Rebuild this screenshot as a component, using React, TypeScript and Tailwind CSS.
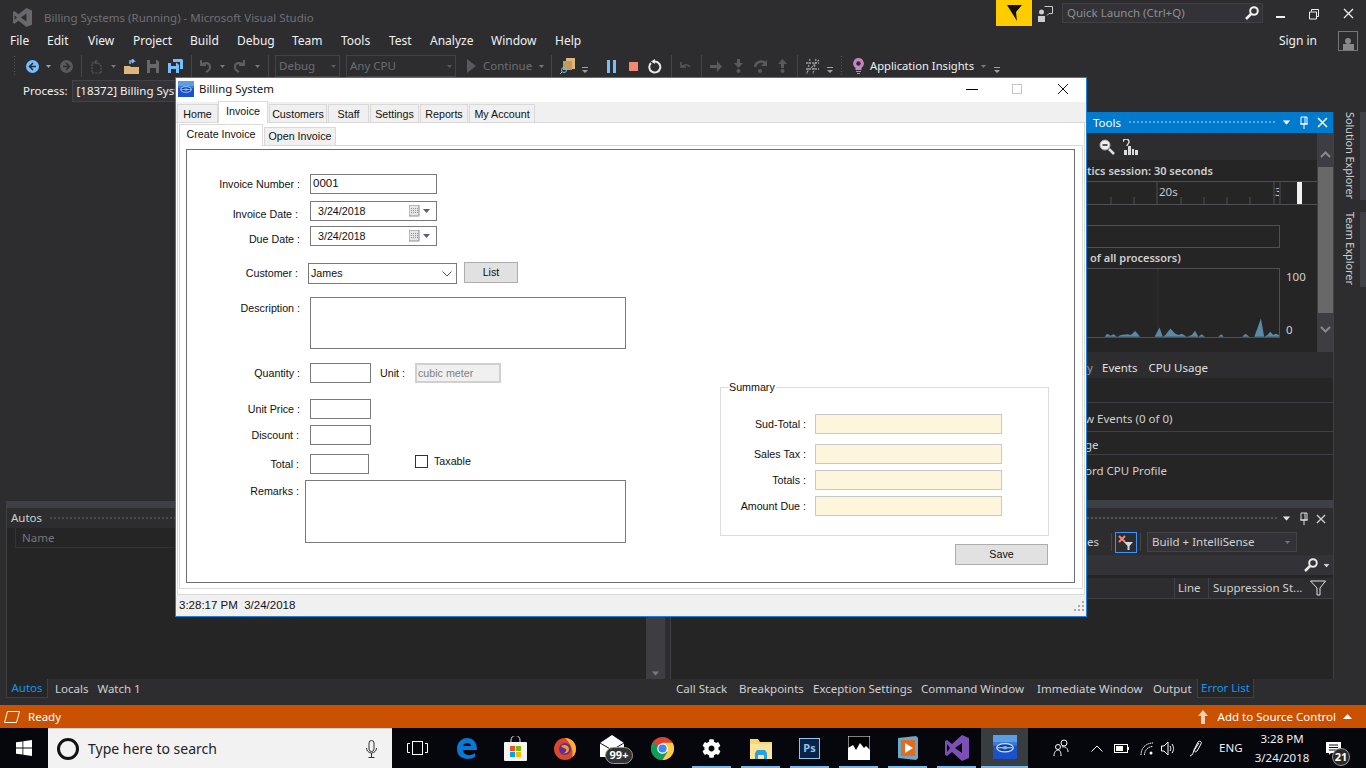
import React from "react";
import { FaCog } from "react-icons/fa";

const menus = [
    ["File", "w-[37px]"], ["Edit", "w-[41px]"], ["View", "w-[45px]"], ["Project", "w-[57px]"],
    ["Build", "w-[47px]"], ["Debug", "w-[55px]"], ["Team", "w-[49px]"], ["Tools", "w-[48px]"],
    ["Test", "w-[41px]"], ["Analyze", "w-[61px]"], ["Window", "w-[64px]"], ["Help", "w-[40px]"],
];

const mainTabs = [
    ["Home", "w-[41px]"], ["Customers", "w-[58px] ml-[1px]"], ["Staff", "w-[41px] ml-[1px]"],
    ["Settings", "w-[49px] ml-[1px]"], ["Reports", "w-[48px] ml-[1px]"], ["My Account", "w-[66px] ml-[1px]"],
];

const chartPath = "M20 695L70 695 78 686 88 692 97 688 108 695 120 690 140 688 150 690 163 678 178 695 222 695 237 667 247 695 255 690 270 670 285 686 295 690 305 686 320 695 335 690 345 677 355 695 365 688 375 695 415 695 425 688 432 695 488 695 498 686 510 695 525 695 545 640 555 695 565 690 573 680 583 690 590 686 600 690 600 695Z";

function Sep({ className }: { className: string }) {
    return <div className={`h-[22px] w-px bg-[#46464a] ${className}`} />;
}

function Caret({ className, color = "#77777b" }: { className: string; color?: string }) {
    return (
        <svg className={className} width="5" height="3" viewBox="0 0 5 3"><path d="M0 0h5L2.5 3z" fill={color} /></svg>
    );
}

function Overflow({ className }: { className: string }) {
    return (
        <svg className={className} width="6" height="6" viewBox="0 0 6 6"><path d="M0 0h6v1H0zM0 3h6L3 6z" fill="#a0a0a0" /></svg>
    );
}

function Grip({ className }: { className: string }) {
    return <div className={`h-[22px] w-[3px] bg-[radial-gradient(#55555a_0.7px,transparent_0.8px)] bg-[length:3px_3px] ${className}`} />;
}

function Dots({ className }: { className: string }) {
    return <div className={`h-[5px] bg-[length:4px_4px] ${className}`} />;
}

function Toolbar() {
    return (
        <div className="flex h-[24px] items-center pl-[13px] text-[11.5px] text-[#6d6d70]">
            <Grip className="" />
            <svg className="ml-[10px]" width="13" height="13" viewBox="0 0 13 13"><circle cx="6.5" cy="6.5" r="6.5" fill="#75beff" /><path d="M7 3L3.5 6.5 7 10M4 6.5h6" stroke="#2d2d30" strokeWidth="1.6" fill="none" /></svg>
            <Caret className="ml-[7px]" color="#a0a0a0" />
            <svg className="ml-[9px]" width="13" height="13" viewBox="0 0 13 13"><circle cx="6.5" cy="6.5" r="6.5" fill="#5a5a5e" /><path d="M6 3l3.5 3.5L6 10M9 6.5H3" stroke="#2d2d30" strokeWidth="1.6" fill="none" /></svg>
            <Sep className="ml-[8px]" />
            <svg className="ml-[8px]" width="13" height="15" viewBox="0 0 13 15"><path d="M2 4h6l3 3v7H2zM6 1v4M4 3h4" stroke="#59595d" strokeWidth="1.2" strokeDasharray="2 1" fill="none" /></svg>
            <Caret className="ml-[8px]" />
            <svg className="ml-[8px]" width="15" height="15" viewBox="0 0 15 15"><path d="M0 7h6l1 1h8v7H0z" fill="#dcb67a" /><path d="M6 5V2h4L8 0M10 2l-2 2" stroke="#75beff" strokeWidth="1.5" fill="none" /></svg>
            <svg className="ml-[8px]" width="12" height="13" viewBox="0 0 12 13"><path d="M0 0h10l2 2v11H0zM3 0v4h6V0zM3 8v5h6V8z" fill="#68686c" fillRule="evenodd" /></svg>
            <svg className="ml-[9px]" width="15" height="14" viewBox="0 0 15 14"><path d="M0 4h9l2 2v8H0zM3 4v3h5V4zM3 10v4h5v-4z" fill="#75beff" fillRule="evenodd" /><path d="M5 0h9l1 1v9h-3V3H5z" fill="#75beff" /></svg>
            <Sep className="ml-[8px]" />
            <svg className="ml-[7px]" width="13" height="14" viewBox="0 0 13 14"><path d="M2 1v5h5M2.5 6C5 3 11 3 11 8c0 2-1.500 4-4 5" stroke="#5f5f63" strokeWidth="2" fill="none" /></svg>
            <Caret className="ml-[8px]" />
            <svg className="ml-[8px]" width="13" height="14" viewBox="0 0 13 14"><path d="M11 1v5H6M10.500 6C8 3 2 3 2 8c0 2 1.500 4 4 5" stroke="#5f5f63" strokeWidth="2" fill="none" /></svg>
            <Caret className="ml-[9px]" />
            <Sep className="ml-[8px]" />
            <div className="ml-[6px] flex h-[22px] w-[65px] items-center justify-between border border-[#434346] px-[3px]"><span>Debug</span><Caret className="" color="#5a5a5e" /></div>
            <div className="ml-[6px] flex h-[22px] w-[110px] items-center justify-between border border-[#434346] px-[3px]"><span>Any CPU</span><Caret className="" color="#5a5a5e" /></div>
            <svg className="ml-[11px]" width="9" height="14" viewBox="0 0 9 14"><path d="M0 0l9 7-9 7z" fill="#5a5a5e" /></svg>
            <span className="ml-[7px] w-[50px]">Continue</span>
            <Caret className="ml-[6px]" />
            <Sep className="ml-[7px]" />
            <svg className="ml-[8px]" width="16" height="16" viewBox="0 0 16 16"><path d="M6 0h9v11H6z" fill="#dcb67a" /><path d="M3 3h9v9H3z" fill="#c29a5f" /><circle cx="4" cy="12" r="2.500" fill="none" stroke="#75beff" /><path d="M2 14l-2 2" stroke="#75beff" /></svg>
            <Overflow className="ml-[6px] mt-[8px]" />
            <div className="ml-[19px] flex h-[13px] w-[9px] justify-between"><div className="w-[3px] bg-[#75beff]" /><div className="w-[3px] bg-[#75beff]" /></div>
            <div className="ml-[13px] size-[9px] bg-[#f48771]" />
            <svg className="ml-[10px]" width="14" height="15" viewBox="0 0 14 15"><path d="M3 4a5.500 5.500 0 1 0 4-1.500" stroke="#e8e8e8" strokeWidth="2" fill="none" /><path d="M7 0v5L3 2.500z" fill="#e8e8e8" /></svg>
            <Sep className="ml-[9px]" />
            <svg className="ml-[7px]" width="13" height="13" viewBox="0 0 13 13"><path d="M2 2v5h5M2.500 7C5 4 9 4 11 7" stroke="#55555a" strokeWidth="1.600" fill="none" /></svg>
            <Sep className="ml-[9px]" />
            <svg className="ml-[8px]" width="12" height="11" viewBox="0 0 12 11"><path d="M0 4h7V0l5 5.500L7 11V7H0z" fill="#5a5a5e" /></svg>
            <svg className="ml-[12px]" width="9" height="14" viewBox="0 0 9 14"><path d="M3 0h3v4h3L4.500 9 0 4h3z" fill="#5a5a5e" /><circle cx="4.500" cy="12" r="2" fill="#5a5a5e" /></svg>
            <svg className="ml-[11px]" width="13" height="14" viewBox="0 0 13 14"><path d="M1 8C2 2 9 1 12 5" stroke="#5a5a5e" strokeWidth="2.500" fill="none" /><path d="M13 1v6H7z" fill="#5a5a5e" /><circle cx="6" cy="12" r="2" fill="#5a5a5e" /></svg>
            <svg className="ml-[11px]" width="9" height="14" viewBox="0 0 9 14"><path d="M3 9h3V5h3L4.500 0 0 5h3z" fill="#5a5a5e" /><circle cx="4.500" cy="12" r="2" fill="#5a5a5e" /></svg>
            <Sep className="ml-[10px]" />
            <svg className="ml-[7px]" width="15" height="17" viewBox="0 0 15 17"><path d="M5 1L2 16M11 1L8 16M1 5h13M1 11h13M14 2L1 15" stroke="#9a9a9a" strokeWidth="1.300" strokeDasharray="2 1" fill="none" /></svg>
            <Overflow className="ml-[7px] mt-[8px]" />
            <Grip className="ml-[7px]" />
            <svg className="ml-[10px]" width="11" height="16" viewBox="0 0 11 16"><path d="M5.500 0a5.500 5.500 0 0 1 3 10v2h-6v-2a5.500 5.500 0 0 1 3-10z" fill="#c586c0" /><circle cx="5.500" cy="5.500" r="2.200" fill="#2d2d30" /><path d="M3 13.500h5M4 15.500h3" stroke="#c586c0" /></svg>
            <span className="ml-[6px] w-[105px] whitespace-nowrap text-[11.2px] text-[#f1f1f1]">Application Insights</span>
            <Caret className="ml-[6px]" />
            <Overflow className="ml-[8px] mt-[8px]" />
        </div>
    );
}

function Field({ className = "" }: { className?: string }) {
    return <div className={`h-[20px] border border-[#7a7a7a] bg-white ${className}`} />;
}

function Label({ text, className = "" }: { text: string; className?: string }) {
    return <div className={`mr-[1px] w-[113px] shrink-0 whitespace-nowrap text-right ${className}`}>{text}</div>;
}

function DateField() {
    return (
        <div className="ml-[9px] flex h-[20px] w-[127px] items-center border border-[#7a7a7a] pl-[7px] pr-[6px]">
            <span className="flex-1">3/24/2018</span>
            <svg width="11" height="12" viewBox="0 0 11 12"><path d="M0 0h10v11H0z" fill="#e4e6ea" stroke="#8a8f98" /><path d="M2 3h1v1H2zM4 3h1v1H4zM6 3h1v1H6zM8 3h1v1H8zM2 5h1v1H2zM4 5h1v1H4zM6 5h1v1H6zM8 5h1v1H8zM2 7h1v1H2zM4 7h1v1H4zM6 7h1v1H6zM8 7h1v1H8z" fill="#8a8f98" /></svg>
            <svg className="ml-[3px]" width="7" height="4" viewBox="0 0 7 4"><path d="M0 0h7L3.500 4z" fill="#566074" /></svg>
        </div>
    );
}

function SummaryRow({ text, className }: { text: string; className: string }) {
    return (
        <div className={`flex items-center ${className}`}>
            <div className="w-[85px] whitespace-nowrap text-right">{text}</div>
            <div className="ml-[9px] h-[20px] w-[187px] border border-[#c8c8c8] bg-[#fdf6dd]" />
        </div>
    );
}

function InvoiceForm() {
    return (
        <div className="flex h-[434px] w-[889px] border border-[#6e6e6e] font-['Liberation_Sans',sans-serif] text-[10.7px] text-[#101010]">
            <div className="w-[533px] shrink-0 pt-[24px]">
                <div className="flex items-center">
                    <Label text="Invoice Number :" />
                    <div className="ml-[9px] flex h-[20px] w-[127px] items-center border border-[#7a7a7a] pl-[2px] text-[11.5px]">0001</div>
                </div>
                <div className="mt-[7px] flex items-center">
                    <Label text="Invoice Date :" className="translate-y-[3px] pr-[2px]" />
                    <DateField />
                </div>
                <div className="mt-[5px] flex items-center">
                    <Label text="Due Date :" className="translate-y-[3px]" />
                    <DateField />
                </div>
                <div className="mt-[17px] flex items-center">
                    <Label text="Customer :" className="pr-[2px]" />
                    <div className="ml-[7px] flex h-[21px] w-[149px] items-center justify-between border border-[#7a7a7a] pl-[2px] pr-[4px]">
                        <span>James</span>
                        <svg width="10" height="6" viewBox="0 0 10 6"><path d="M0.500 0.500L5 5l4.500-4.500" stroke="#555" fill="none" /></svg>
                    </div>
                    <div className="ml-[7px] flex h-[21px] w-[54px] -translate-y-px items-center justify-center border border-[#adadad] bg-[#e1e1e1]">List</div>
                </div>
                <div className="mt-[13px] flex items-start">
                    <Label text="Description :" className="pt-[3px]" />
                    <Field className="ml-[9px] !h-[52px] w-[316px]" />
                </div>
                <div className="mt-[14px] flex items-center">
                    <Label text="Quantity :" />
                    <Field className="ml-[9px] w-[61px]" />
                    <span className="ml-[9px] w-[35px]">Unit :</span>
                    <div className="flex h-[20px] w-[86px] items-center border-2 border-[#d0d0d0] bg-[#f0f0f0] pl-[1px] text-[#808080]">cubic meter</div>
                </div>
                <div className="mt-[16px] flex items-center">
                    <Label text="Unit Price :" />
                    <Field className="ml-[9px] w-[61px]" />
                </div>
                <div className="mt-[6px] flex items-center">
                    <Label text="Discount :" className="pr-[1px]" />
                    <Field className="ml-[9px] w-[61px]" />
                </div>
                <div className="mt-[9px] flex items-center">
                    <Label text="Total :" className="pr-[1px]" />
                    <Field className="ml-[9px] w-[59px]" />
                    <div className="ml-[46px] size-[13px] -translate-y-[3px] border border-[#333]" />
                    <span className="ml-[6px] -translate-y-[3px]">Taxable</span>
                </div>
                <div className="mt-[6px] flex items-start">
                    <Label text="Remarks :" className="pr-[1px] pt-[3px]" />
                    <Field className="ml-[4px] !h-[63px] w-[321px]" />
                </div>
            </div>
            <div className="w-[329px] pt-[231px]">
                <fieldset className="h-[155px] border border-[#dcdcdc] px-[8px]">
                    <legend className="pr-[1px] leading-[12px]">Summary</legend>
                    <SummaryRow text="Sud-Total :" className="-ml-[8px] mt-[21px]" />
                    <SummaryRow text="Sales Tax :" className="-ml-[8px] mt-[10px]" />
                    <SummaryRow text="Totals :" className="-ml-[8px] mt-[6px]" />
                    <SummaryRow text="Amount Due :" className="-ml-[8px] mt-[6px]" />
                </fieldset>
                <div className="ml-[235px] mt-[8px] flex h-[21px] w-[93px] items-center justify-center border border-[#adadad] bg-[#e1e1e1]">Save</div>
            </div>
        </div>
    );
}

function BillingWindow() {
    return (
        <div className="absolute left-[175px] top-[77px] flex h-[540px] w-[912px] flex-col border border-[#1883d7] bg-white font-['Liberation_Sans',sans-serif] text-[10.7px] text-[#101010]">
            <div className="flex h-[24px] shrink-0 items-center pb-[2px] pl-[2px]">
                <BillingIcon size={16} />
                <span className="ml-[5px] font-['Noto_Sans',sans-serif] text-[11.4px] text-[#111]">Billing System</span>
                <div className="ml-auto flex items-center pr-[17px]">
                    <div className="h-px w-[12px] bg-black" />
                    <div className="ml-[34px] size-[10px] border border-[#c4c4c4]" />
                    <svg className="ml-[35px]" width="12" height="12" viewBox="0 0 12 12"><path d="M1 1l10 10M11 1L1 11" stroke="#111" fill="none" /></svg>
                </div>
            </div>
            <div className="flex h-[21px] shrink-0 items-end border-b border-[#d9d9d9] bg-[#f0f0f0] pl-px">
                {mainTabs.slice(0, 1).map(([t, w]) => <div key={t} className={`-mb-px flex h-[19px] items-center justify-center border border-[#d9d9d9] pt-[1px] ${w}`}>{t}</div>)}
                <div className="-mb-px flex h-[22px] w-[50px] items-center justify-center border border-b-0 border-[#d9d9d9] bg-white pb-[2px]">Invoice</div>
                {mainTabs.slice(1).map(([t, w]) => <div key={t} className={`-mb-px flex h-[19px] items-center justify-center border border-[#d9d9d9] pt-[1px] ${w}`}>{t}</div>)}
            </div>
            <div className="mx-px flex flex-1 flex-col border-x border-b border-[#d9d9d9] px-px pb-[5px] pt-px">
                <div className="flex h-[22px] shrink-0 items-end border-b border-[#d9d9d9]">
                    <div className="-mb-px flex h-[22px] w-[84px] items-center justify-center border border-b-0 border-[#d9d9d9] bg-white pb-[2px]">Create Invoice</div>
                    <div className="-mb-px ml-px flex h-[19px] w-[72px] items-center justify-center border border-[#d9d9d9] bg-[#f0f0f0]">Open Invoice</div>
                </div>
                <div className="flex-1 border-x border-b border-[#d9d9d9] pl-[6px] pt-[3px]">
                    <InvoiceForm />
                </div>
            </div>
            <div className="flex h-[21px] shrink-0 items-center bg-[#f0f0f0] pl-[3px] text-[11.5px]">
                <span>3:28:17 PM&nbsp;&nbsp;3/24/2018</span>
                <svg className="ml-auto mr-[2px]" width="11" height="11" viewBox="0 0 11 11"><path d="M9 1h2v2H9zM5 5h2v2H5zM9 5h2v2H9zM1 9h2v2H1zM5 9h2v2H5zM9 9h2v2H9z" fill="#a8a8a8" /></svg>
            </div>
        </div>
    );
}

function BillingIcon({ size }: { size: number }) {
    return (
        <svg width={size} height={size} viewBox="0 0 16 16">
            <rect width="16" height="16" fill="#1a52cc" />
            <rect width="16" height="5" fill="#5b9ee6" />
            <rect y="5" width="16" height="2" fill="#3a7ad8" />
            <ellipse cx="8" cy="8.500" rx="5.500" ry="2.800" fill="#10409c" stroke="#cfe4fa" strokeWidth="0.800" />
            <path d="M3 8.500h10" stroke="#e8f2fc" strokeWidth="0.600" />
            <ellipse cx="8" cy="8.500" rx="1.800" ry="1.200" fill="#7db4ec" />
        </svg>
    );
}

function DiagnosticTools() {
    return (
        <div className="ml-auto flex h-[396px] w-[264px] flex-col border-r border-[#3f3f46] text-[11.5px]">
            <div className="flex h-[21px] shrink-0 items-center bg-[#007acc] pl-[23px] text-white">
                <span>Tools</span>
                <Dots className="ml-[7px] flex-1 bg-[radial-gradient(#59a8de_0.8px,transparent_0.9px)]" />
                <Caret className="ml-[7px] scale-150" color="#fff" />
                <svg className="ml-[11px]" width="8" height="13" viewBox="0 0 8 13"><path d="M1 1h6v7H1zM0 8h8M4 8v5M5 1v7" stroke="#fff" fill="none" /></svg>
                <svg className="ml-[9px] mr-[5px]" width="11" height="11" viewBox="0 0 11 11"><path d="M1 1l9 9M10 1l-9 9" stroke="#fff" strokeWidth="1.500" /></svg>
            </div>
            <div className="flex h-[219px] shrink-0">
                <div className="w-[247px] bg-[#252526]">
                    <div className="flex h-[27px] items-center bg-[#2d2d30] pl-[29px]">
                        <svg width="16" height="16" viewBox="0 0 16 16"><circle cx="6" cy="6" r="5" fill="#eee" stroke="#aaa" /><path d="M3.500 6h5" stroke="#222" strokeWidth="1.500" /><path d="M10 10l5 5" stroke="#ddd" strokeWidth="2.500" /></svg>
                        <svg className="ml-[8px]" width="15" height="16" viewBox="0 0 15 16"><path d="M0 3a3 3 0 0 1 6 0c0 2-2 2-2 4" fill="none" stroke="#ddd" strokeWidth="1.400" /><path d="M5 7h3v9H5zM9 10h2v6H9zM12 11h3v5h-3zM1 11h3v5H1z" fill="#ddd" /></svg>
                    </div>
                    <div className="flex h-[21px] items-center pl-[17px] pt-px text-[11px] font-semibold text-[#d0d0d0]">tics session: 30 seconds</div>
                    <div className="relative h-[24px] border-y border-[#505054]">
                        <svg className="absolute inset-0" width="247" height="23" viewBox="0 0 247 23">
                            <path d="M41 15v7M64 15v7M87 0v22M111 15v7M134 15v7M157 15v7M180 15v7M204 0v22M210 0v22" stroke="#505054" fill="none" />
                            <rect x="227" y="0" width="5" height="22" fill="#f2f2f2" />
                        </svg>
                        <span className="absolute left-[89px] top-[1px] text-[#c8c8c8]">20s</span>
                        <span className="absolute left-[205px] top-[1px] w-[4px] overflow-hidden text-[#c8c8c8]">3</span>
                    </div>
                    <div className="ml-[-1px] mt-[20px] h-[23px] w-[211px] border border-[#505054]" />
                    <div className="mt-[1px] flex h-[19px] items-center pl-[20px] text-[11px] font-semibold text-[#d0d0d0]">of all processors)</div>
                    <div className="flex h-[70px] items-start">
                        <div className="h-[70px] w-[210px] border border-[#505054]">
                            <svg width="208" height="68" viewBox="-32 490 632 206" preserveAspectRatio="none"><path d="M232 490v206" stroke="#3a3a3d" strokeWidth="2" /><path d={chartPath} fill="#5a8aa5" /></svg>
                        </div>
                        <div className="ml-[6px] flex h-[70px] flex-col justify-between text-[#d0d0d0]">
                            <span>100</span>
                            <span>0</span>
                        </div>
                    </div>
                </div>
                <div className="flex w-[16px] flex-col items-center bg-[#3e3e42] pt-[18px]">
                    <svg width="11" height="7" viewBox="0 0 11 7"><path d="M1 6l4.500-4.500L10 6" stroke="#8a8a8d" strokeWidth="2" fill="none" /></svg>
                    <div className="mt-[9px] h-[146px] w-[15px] bg-[#686868]" />
                    <svg className="mt-[13px]" width="11" height="7" viewBox="0 0 11 7"><path d="M1 1l4.500 4.500L10 1" stroke="#8a8a8d" strokeWidth="2" fill="none" /></svg>
                </div>
            </div>
            <div className="flex h-[26px] shrink-0 items-center bg-[#2d2d30] pl-[17px] pt-[5px] text-[#e0e0e0]">
                <span className="w-[15px] text-[#9a9a9a]">y</span>
                <span>Events</span>
                <span className="ml-[11px]">CPU Usage</span>
            </div>
            <div className="flex flex-1 flex-col bg-[#252526] pl-[15px] text-[#d0d0d0]">
                <div className="h-[25px] shrink-0 border-b border-[#3f3f46]" />
                <div className="flex h-[29px] shrink-0 items-center border-b border-[#3f3f46] pt-[3px]">w Events (0 of 0)</div>
                <div className="flex h-[23px] shrink-0 items-center border-b border-[#3f3f46] pt-[3px]">ge</div>
                <div className="flex h-[32px] shrink-0 items-center">ord CPU Profile</div>
                <div className="-ml-[15px] mt-auto h-[8px] bg-[#3f3f46]" />
            </div>
        </div>
    );
}

function ErrorList() {
    return (
        <div className="flex h-[171px] flex-col border-x border-[#3f3f46] bg-[#252526] text-[11.5px] text-[#d0d0d0]">
            <div className="flex h-[21px] shrink-0 items-center justify-end bg-[#2d2d30] pr-[7px]">
                <Dots className="w-[200px] bg-[radial-gradient(#55555a_0.8px,transparent_0.9px)]" />
                <Caret className="ml-[6px] scale-150" color="#e0e0e0" />
                <svg className="ml-[11px]" width="8" height="13" viewBox="0 0 8 13"><path d="M1 1h6v7H1zM0 8h8M4 8v5M5 1v7" stroke="#ddd" fill="none" /></svg>
                <svg className="ml-[8px]" width="10" height="10" viewBox="0 0 11 11"><path d="M1 1l9 9M10 1l-9 9" stroke="#ccc" strokeWidth="1.500" /></svg>
            </div>
            <div className="flex h-[26px] shrink-0 items-center justify-end bg-[#2d2d30] pr-[36px]">
                <span>es</span>
                <div className="ml-[12px] h-[18px] w-px bg-[#46464a]" />
                <div className="ml-[3px] flex h-[21px] w-[22px] items-center justify-center border border-[#3399ff]">
                    <svg width="16" height="15" viewBox="0 0 16 15"><path d="M1 1l6 6M7 1L1 7" stroke="#f48771" strokeWidth="2" /><path d="M6 7h9l-3.500 4v4h-2v-4z" fill="#d8d8d8" /></svg>
                </div>
                <div className="ml-[3px] h-[18px] w-px bg-[#46464a]" />
                <div className="ml-[6px] flex h-[20px] w-[150px] items-center justify-between border border-[#434346] bg-[#333337] px-[4px]">
                    <span>Build + IntelliSense</span>
                    <Caret className="mr-[2px]" />
                </div>
            </div>
            <div className="flex h-[20px] shrink-0 items-center justify-end bg-[#333337] pr-[4px]">
                <svg width="14" height="14" viewBox="0 0 14 14"><circle cx="9" cy="5" r="3.800" fill="none" stroke="#e8e8e8" strokeWidth="2" /><path d="M6 8l-5 5" stroke="#e8e8e8" strokeWidth="2.500" /></svg>
                <Caret className="ml-[6px] scale-125" color="#d0d0d0" />
            </div>
            <div className="mt-[3px] flex h-[21px] shrink-0 items-center justify-end border-b border-[#3f3f46] bg-[#2d2d30]">
                <div className="flex h-full w-[35px] items-center border-x border-[#3f3f46] pl-[3px]">Line</div>
                <span className="ml-[4px] w-[97px] whitespace-nowrap">Suppression St...</span>
                <svg className="mr-[7px]" width="16" height="16" viewBox="0 0 16 16"><path d="M0.500 1h15L10 8v7H7V8z" fill="none" stroke="#e0e0e0" /></svg>
            </div>
        </div>
    );
}

function AutosPanel() {
    return (
        <div className="flex h-[178px] flex-col border-x border-[#3f3f46] bg-[#252526] text-[11.5px] text-[#d0d0d0]">
            <div className="h-[7px] shrink-0 bg-[#3f3f46]" />
            <div className="flex h-[20px] shrink-0 items-center bg-[#2d2d30] pl-[4px]">
                <span>Autos</span>
                <Dots className="ml-[7px] flex-1 bg-[radial-gradient(#4a4a4e_0.8px,transparent_0.9px)]" />
            </div>
            <div className="ml-[8px] flex h-[20px] shrink-0 items-center border-b border-l border-[#333337] pl-[6px] text-[#77777b]">Name</div>
            <div className="flex flex-1 justify-end">
                <div className="flex w-[18px] flex-col items-center justify-end bg-[#3e3e42] pb-[4px]">
                    <Caret className="scale-150" color="#77777b" />
                </div>
            </div>
        </div>
    );
}

function TaskCell({ on = false, children }: { on?: boolean; children: React.ReactNode }) {
    return (
        <div className="relative flex h-[40px] w-[49px] items-center justify-center">
            {children}
            {on && <div className="absolute bottom-0 left-[5px] h-[2px] w-[39px] bg-[#76b9ed]" />}
        </div>
    );
}

function Taskbar() {
    return (
        <div className="flex h-[40px] shrink-0 items-center bg-[#05070c] text-white">
            <div className="flex h-full w-[48px] items-center justify-center">
                <svg width="16" height="16" viewBox="0 0 16 16"><path d="M0 2.300l6.500-.9v6.200H0zM7.300 1.300L16 0v7.600H7.300zM0 8.400h6.500v6.200L0 13.700zM7.300 8.400H16V16l-8.700-1.300z" fill="#fff" /></svg>
            </div>
            <div className="flex h-full w-[344px] items-center border-t border-[#cfcfcf] bg-[#f2f2f2] pl-[9px] text-[#222]">
                <div className="size-[22px] rounded-full border-[3px] border-[#111]" />
                <span className="ml-[9px] text-[14px]">Type here to search</span>
                <svg className="ml-auto mr-[15px]" width="11" height="18" viewBox="0 0 11 18"><rect x="3" y="0.500" width="5" height="11" rx="2.500" fill="none" stroke="#333" /><path d="M0.500 8a5 5 0 0 0 10 0M5.500 13v4M2.500 17.500h6" stroke="#333" fill="none" /></svg>
            </div>
            <div className="flex w-[50px] items-center justify-center">
                <svg width="21" height="14" viewBox="0 0 21 14"><rect x="5.500" y="0.500" width="10" height="13" fill="none" stroke="#fff" /><path d="M3 2.500H0.500v9H3M18 2.500h2.500v9H18" stroke="#fff" fill="none" /></svg>
            </div>
            <TaskCell>
                <svg width="21" height="21" viewBox="0 0 21 21"><path d="M1 11C1 4 6 0 11 0c6 0 10 4 10 12H7c0 5 7 7 12 3v4c-7 4-18 2-18-8zm6-3h8c0-4-7-4-8 0z" fill="#0a78d7" /></svg>
            </TaskCell>
            <TaskCell>
                <svg width="23" height="25" viewBox="0 0 23 25"><path d="M7 7V4a4 4 0 0 1 9 0v3" fill="none" stroke="#ddd" /><rect y="6" width="23" height="19" rx="1" fill="#f4f4f4" /><rect x="6" y="10" width="5" height="5" fill="#f25022" /><rect x="12" y="10" width="5" height="5" fill="#7fba00" /><rect x="6" y="16" width="5" height="5" fill="#00a4ef" /><rect x="12" y="16" width="5" height="5" fill="#ffb900" /></svg>
            </TaskCell>
            <TaskCell>
                <svg width="22" height="24" viewBox="0 0 22 24"><circle cx="11" cy="13" r="11" fill="#d9482b" /><path d="M11 2c7 0 11 5 11 11 0 4-2 7-4 8 2-6-1-13-7-19z" fill="#ffb02e" /><circle cx="11" cy="13" r="6" fill="#5b2fa0" /><path d="M7 10c3-2 8-1 8 3s-4 5-6 4c2 0 4-2 3-4-1-1-3-1-5-3z" fill="#ff9a1f" /></svg>
            </TaskCell>
            <TaskCell>
                <div className="relative flex size-full items-center justify-center">
                    <svg className="-translate-x-[2px] -translate-y-[2px]" width="24" height="22" viewBox="0 0 24 22"><path d="M0 8l12-8 12 8v14H0z" fill="#fff" /><path d="M0 8l12 7 12-7" fill="none" stroke="#111" /></svg>
                    <div className="absolute left-[16px] top-[19px] flex h-[17px] w-[28px] items-center justify-center rounded-full border border-[#999] bg-[#333] text-[11px] font-bold">99+</div>
                </div>
            </TaskCell>
            <TaskCell>
                <svg width="23" height="23" viewBox="0 0 24 24"><circle cx="12" cy="12" r="12" fill="#db4437" /><path d="M12 12L1.600 6A12 12 0 0 0 12 24l5-8z" fill="#0f9d58" /><path d="M12 6h10.400A12 12 0 0 1 12 24l5-8z" fill="#ffcd40" /><circle cx="12" cy="12" r="5.500" fill="#fff" /><circle cx="12" cy="12" r="4.300" fill="#4285f4" /></svg>
            </TaskCell>
            <TaskCell on><FaCog size={19} color="#fff" /></TaskCell>
            <TaskCell on>
                <svg width="22" height="22" viewBox="0 0 22 22"><path d="M0 2h8l2 3h12v17H0z" fill="#f6d776" /><path d="M0 7h22v15H0z" fill="#fbe49a" /><path d="M7 13h8l2 3v6h-3v-4H8v4H5v-6z" fill="#29a1e0" /></svg>
            </TaskCell>
            <TaskCell on>
                <div className="flex size-[21px] items-center justify-center border border-[#8fc4ee] bg-[#0b2347] text-[11px] font-bold text-[#8fc4ee]">Ps</div>
            </TaskCell>
            <TaskCell on>
                <svg width="22" height="24" viewBox="0 0 22 24"><rect width="22" height="24" fill="#000" stroke="#fff" /><path d="M0 24V12l5-3 3 5 4-7 4 5 2-2 4 4v10z" fill="#fff" /></svg>
            </TaskCell>
            <TaskCell on>
                <svg width="20" height="24" viewBox="0 0 20 24"><path d="M0 2l18-2 2 2v20l-2 2-18-2z" fill="#6aa9c9" /><path d="M3 4h14v16H3z" fill="#e06c1f" /><path d="M7 7l8 5-8 5z" fill="#fff" /></svg>
            </TaskCell>
            <TaskCell on>
                <svg width="24" height="26" viewBox="0 0 24 26"><path d="M17 0l7 3v20l-7 3-10-9-5 4-2-1V6l2-1 5 4zM2 9v8l3-4zM10 13l7 5V8z" fill="#7b4fb5" fillRule="evenodd" /></svg>
            </TaskCell>
            <div className="relative flex h-full w-[47px] items-center justify-center bg-[#3a3d40]">
                <div className="-translate-y-[1px]"><BillingIcon size={24} /></div>
                <div className="absolute bottom-0 h-[2px] w-full bg-[#76b9ed]" />
            </div>
            <svg className="ml-[25px]" width="16" height="18" viewBox="0 0 16 18"><circle cx="11" cy="4" r="3" fill="none" stroke="#fff" /><circle cx="5" cy="8" r="2.500" fill="none" stroke="#fff" /><path d="M1 17c0-4 2-6 4-6s3 2 3 6M9 8c3-1 6 1 6 5" fill="none" stroke="#fff" /></svg>
            <svg className="ml-[22px]" width="12" height="7" viewBox="0 0 12 7"><path d="M0.500 6.500L6 1l5.500 5.500" stroke="#fff" fill="none" /></svg>
            <svg className="ml-[11px]" width="15" height="9" viewBox="0 0 15 9"><rect x="0.500" y="0.500" width="13" height="8" fill="none" stroke="#fff" /><rect x="2" y="2" width="7" height="5" fill="#fff" /><path d="M14 3h1v3h-1z" fill="#fff" /></svg>
            <svg className="ml-[11px]" width="13" height="13" viewBox="0 0 13 13"><circle cx="11" cy="11" r="1.500" fill="#fff" /><path d="M1 13C1 6 6 1 13 1M4.500 13c0-5 3.500-8.500 8.500-8.500" stroke="#fff" fill="none" strokeDasharray="1.500 0.700" /></svg>
            <svg className="ml-[8px]" width="14" height="15" viewBox="0 0 14 15"><path d="M0.500 5h2.500l4-4v13l-4-4H0.500zM9 5c1 1.500 1 3.500 0 5M11 3c2 3 2 6 0 9" stroke="#fff" fill="none" /></svg>
            <svg className="ml-[14px]" width="15" height="17" viewBox="0 0 15 17"><path d="M1 16c3-1 3-3 4-6l4-8c2-2 4 0 3 2L8 11c-2 2-3 0-2-2l4-6" stroke="#fff" fill="none" /></svg>
            <span className="ml-[15px] w-[24px] text-[11.5px] text-[#f0f0f0]">ENG</span>
            <div className="ml-[15px] flex w-[48px] flex-col items-center gap-[3px] whitespace-nowrap text-[11.5px] leading-[16px] text-[#f0f0f0]">
                <span>3:28 PM</span>
                <span>3/24/2018</span>
            </div>
            <div className="relative ml-[20px] h-[40px] w-[24px]">
                <svg className="absolute left-0 top-[14px]" width="15" height="13" viewBox="0 0 15 13"><path d="M0 0h15v11H5l-2 2v-2H0z" fill="#fff" /><path d="M3 3h9M3 5.500h9M3 8h9" stroke="#111" /></svg>
                <div className="absolute left-[6px] top-[20px] flex size-[18px] items-center justify-center rounded-full border border-[#999] bg-[#2a2a2a] text-[11px] font-bold">21</div>
            </div>
        </div>
    );
}

export default function App(): React.JSX.Element {
    return (
        <div className="relative flex h-[768px] w-[1366px] flex-col overflow-hidden bg-[#2d2d30] font-['Noto_Sans',sans-serif] text-[11.5px]">
            <div className="flex h-[28px] shrink-0 items-start">
                <svg className="ml-[12px] mt-[8px]" width="21" height="19" viewBox="0 0 24 24"><path d="M17 0l7 3v18l-7 3-10-8-5 4-2-1V5l2-1 5 4zM2 9v6l3-3zM10 12l7 5V7z" fill="#68686c" fillRule="evenodd" /></svg>
                <span className="ml-[11px] mt-[9px] whitespace-nowrap text-[#707074]">Billing Systems (Running) - Microsoft Visual Studio</span>
                <div className="ml-auto flex h-[26px] items-start">
                    <div className="flex h-[26px] w-[36px] items-center justify-center bg-[#ffcc00]">
                        <svg width="15" height="16" viewBox="0 0 15 16"><path d="M0 0h15L9 7l1 9z" fill="#111" /></svg>
                    </div>
                    <svg className="ml-[6px] mt-[6px]" width="15" height="16" viewBox="0 0 15 16"><path d="M6.500 0.500h8v7H11l-2 2" stroke="#ccc" fill="none" /><circle cx="3.500" cy="6" r="2.500" fill="#ccc" /><path d="M0 10h7v6H0z" fill="#ccc" /></svg>
                    <div className="ml-[9px] mt-[3px] flex h-[20px] w-[201px] items-center justify-between border border-[#3f3f46] bg-[#333337] pl-[4px] pr-[3px] text-[#8f8f92]">
                        <span>Quick Launch (Ctrl+Q)</span>
                        <svg width="14" height="14" viewBox="0 0 14 14"><circle cx="9" cy="5" r="3.800" fill="none" stroke="#f0f0f0" strokeWidth="2" /><path d="M6 8l-5 5" stroke="#f0f0f0" strokeWidth="2.500" /></svg>
                    </div>
                    <div className="ml-[13px] mt-[16px] h-[2px] w-[9px] bg-[#f0f0f0]" />
                    <svg className="ml-[24px] mt-[9px]" width="10" height="11" viewBox="0 0 10 11"><path d="M2.500 2.500V0.500h7v7H7.500M0.500 3h7v7h-7z" stroke="#f0f0f0" fill="none" /></svg>
                    <svg className="ml-[24px] mt-[8px] mr-[12px]" width="11" height="11" viewBox="0 0 11 11"><path d="M1 1l9 9M10 1l-9 9" stroke="#f0f0f0" strokeWidth="1.200" /></svg>
                </div>
            </div>
            <div className="flex h-[26px] shrink-0 items-center pl-[10px] text-[12px] text-[#f1f1f1]">
                {menus.map(([name, w]) => <span key={name} className={w}>{name}</span>)}
                <span className="ml-auto">Sign in</span>
                <div className="ml-[21px] mr-[8px] flex size-[20px] flex-col items-center justify-end border border-[#777]">
                    <div className="size-[6px] rounded-full bg-[#888]" />
                    <div className="h-[6px] w-[11px] bg-[#888]" />
                </div>
            </div>
            <Toolbar />
            <div className="flex h-[25px] shrink-0 items-center pl-[23px] text-[#f1f1f1]">
                <span>Process:</span>
                <div className="ml-[4px] flex h-[22px] w-[200px] items-center border border-[#434346] bg-[#333337] pl-[4px] whitespace-nowrap">[18372] Billing Syst</div>
            </div>
            <div className="flex min-h-0 flex-1">
                <div className="flex w-[670px] shrink-0 flex-col justify-end pl-[6px] pr-[5px]">
                    <AutosPanel />
                </div>
                <div className="flex w-[664px] shrink-0 flex-col pt-[9px]">
                    <DiagnosticTools />
                    <ErrorList />
                </div>
                <div className="flex w-[32px] shrink-0 flex-col pt-[9px] text-[11px] tracking-[-0.1px] text-[#d0d0d0]">
                    <div className="flex h-[88px] justify-between">
                        <span className="ml-[7px] whitespace-nowrap [writing-mode:vertical-rl]">Solution Explorer</span>
                        <div className="w-[6px] bg-[#3f3f46]" />
                    </div>
                    <div className="mt-[12px] flex h-[75px] justify-between">
                        <span className="ml-[7px] whitespace-nowrap [writing-mode:vertical-rl]">Team Explorer</span>
                        <div className="w-[6px] bg-[#3f3f46]" />
                    </div>
                </div>
            </div>
            <div className="flex h-[26px] shrink-0 items-start text-[#d0d0d0]">
                <div className="flex w-[670px] shrink-0 items-center pl-[6px]">
                    <div className="flex h-[19px] w-[42px] items-center justify-center border border-t-0 border-[#3f3f46] bg-[#252526] text-[#0e97f5]">Autos</div>
                    <span className="ml-[7px] mt-[1px]">Locals</span>
                    <span className="ml-[9px] mt-[1px]">Watch 1</span>
                </div>
                <div className="flex items-center pl-[6px]">
                    <span className="w-[63px]">Call Stack</span>
                    <span className="w-[74px]">Breakpoints</span>
                    <span className="w-[108px]">Exception Settings</span>
                    <span className="w-[116px]">Command Window</span>
                    <span className="w-[116px]">Immediate Window</span>
                    <span className="w-[44px]">Output</span>
                    <div className="flex h-[19px] w-[57px] items-center justify-center border border-t-0 border-[#3f3f46] bg-[#252526] text-[#0e97f5]">Error List</div>
                </div>
            </div>
            <div className="flex h-[23px] shrink-0 items-center bg-[#ca5100] pl-[4px] text-white">
                <svg width="16" height="12" viewBox="0 0 16 12"><path d="M3.500 0.500h12l-3 11h-12z" fill="none" stroke="#fff" /></svg>
                <span className="ml-[8px]">Ready</span>
                <svg className="ml-auto" width="10" height="14" viewBox="0 0 10 14"><path d="M5 0l5 6H7v8H3V6H0z" fill="#f0d0b8" /></svg>
                <span className="ml-[10px]">Add to Source Control</span>
                <svg className="ml-[7px] mr-[14px]" width="9" height="5" viewBox="0 0 9 5"><path d="M0 5l4.500-5L9 5z" fill="#fff" /></svg>
            </div>
            <Taskbar />
            <BillingWindow />
        </div>
    );
}
